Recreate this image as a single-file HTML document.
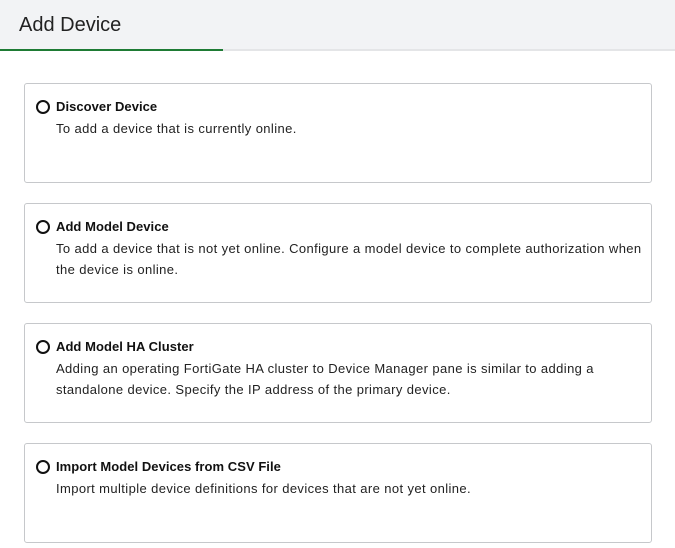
<!DOCTYPE html>
<html><head><style>
body{margin:0;width:675px;height:548px;background:#fff;font-family:"Liberation Sans",sans-serif;color:#222;overflow:hidden;position:relative}
.hdr{position:absolute;left:0;top:0;width:675px;height:49px;background:#f2f3f5;border-bottom:2px solid #e4e5e7}
.hdr .g{position:absolute;left:0;bottom:-2px;width:223px;height:2px;background:#1e7b34}
.hdr span{position:absolute;left:19px;top:14px;font-size:20px;color:#222}
.card{position:absolute;left:24px;width:626px;height:98px;border:1px solid #c6c8cb;border-radius:3px;box-sizing:content-box}
.r{position:absolute;left:11px;top:16px;width:10px;height:10px;border:2px solid #111;border-radius:50%}
.t{position:absolute;left:31px;top:15px;font-size:13px;font-weight:bold;color:#111;letter-spacing:0.05px}
.d{position:absolute;left:31px;top:34px;width:600px;font-size:13px;line-height:21px;color:#222;letter-spacing:0.39px;white-space:nowrap}
</style></head><body>
<div class="hdr"><div class="g"></div><span>Add Device</span></div>
<div class="card" style="top:83px"><div class="r"></div><div class="t">Discover Device</div><div class="d">To add a device that is currently online.</div></div>
<div class="card" style="top:203px"><div class="r"></div><div class="t">Add Model Device</div><div class="d">To add a device that is not yet online. Configure a model device to complete authorization when<br>the device is online.</div></div>
<div class="card" style="top:323px"><div class="r"></div><div class="t">Add Model HA Cluster</div><div class="d">Adding an operating FortiGate HA cluster to Device Manager pane is similar to adding a<br>standalone device. Specify the IP address of the primary device.</div></div>
<div class="card" style="top:443px"><div class="r"></div><div class="t">Import Model Devices from CSV File</div><div class="d">Import multiple device definitions for devices that are not yet online.</div></div>
</body></html>
